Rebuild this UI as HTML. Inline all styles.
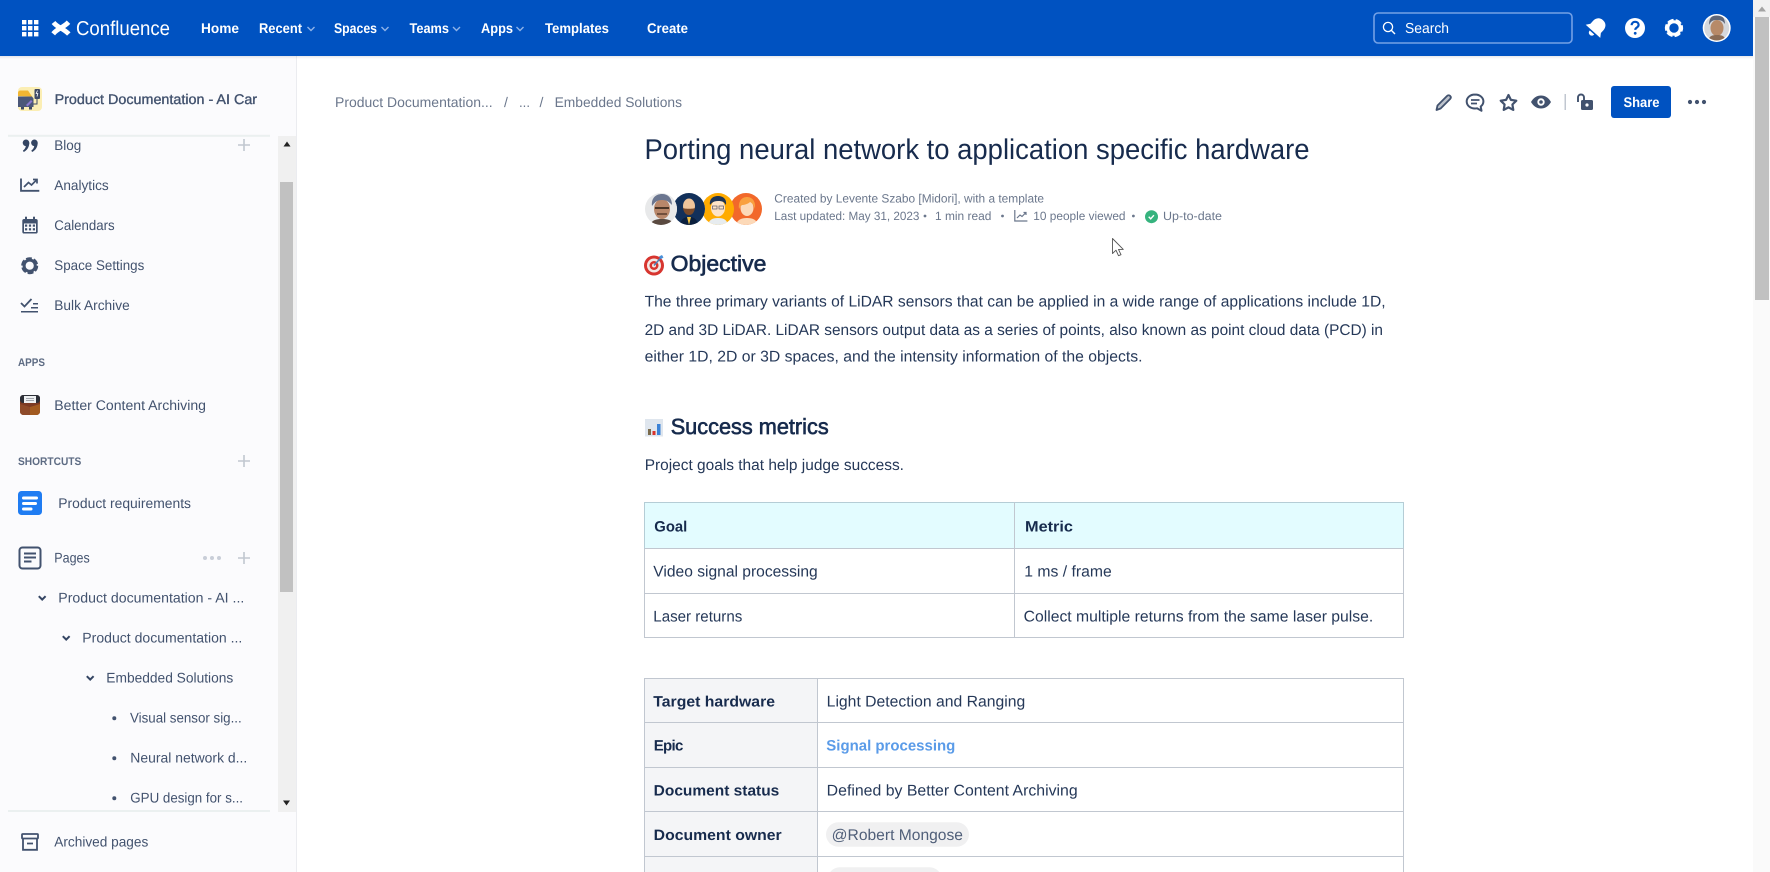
<!DOCTYPE html>
<html><head><meta charset="utf-8"><title>Porting neural network to application specific hardware</title>
<style>
html,body{margin:0;padding:0;background:#fff;overflow:hidden;width:1770px;height:872px}
svg{display:block}
text{font-family:"Liberation Sans",sans-serif;text-rendering:geometricPrecision}
.s{font-size:14px;fill:#42526e}
.n{font-size:14px;font-weight:bold;fill:#fff}
.m{font-size:12px;fill:#6b778c}
.b{font-size:15.5px;fill:#253858}
.h{font-size:15px;font-weight:bold;fill:#172b4d}
.bc{font-size:14px;fill:#6b778c}
</style></head><body>
<svg width="1770" height="872" viewBox="0 0 1770 872" xmlns="http://www.w3.org/2000/svg">
<defs>
<linearGradient id="sh" x1="0" y1="0" x2="0" y2="1"><stop offset="0" stop-color="#091e42" stop-opacity=".1"/><stop offset="1" stop-color="#091e42" stop-opacity="0"/></linearGradient>
<clipPath id="c1"><circle cx="661" cy="209" r="16"/></clipPath>
<clipPath id="c2"><circle cx="689" cy="209" r="16"/></clipPath>
<clipPath id="c3"><circle cx="718" cy="209" r="16"/></clipPath>
<clipPath id="c4"><circle cx="746" cy="209" r="16"/></clipPath>
<clipPath id="c5"><circle cx="1716.7" cy="28" r="12.5"/></clipPath>
</defs>
<rect width="1770" height="872" fill="#fff"/>

<!-- sidebar -->
<rect x="0" y="56" width="296" height="816" fill="#fbfbfd"/>
<rect x="296" y="56" width="1" height="816" fill="#ebecf0"/>

<!-- sidebar scrollbar -->
<rect x="278" y="136" width="18" height="676" fill="#f0f0f0"/>
<rect x="280" y="182" width="13" height="410" fill="#c1c1c1"/>
<path d="M283.5 146.5h7l-3.5-5z" fill="#222"/>
<path d="M283 800.5h7l-3.5 5z" fill="#222"/>

<!-- nav -->
<rect x="0" y="0" width="1753" height="56" fill="#0052c1"/>
<rect x="0" y="56" width="1753" height="3" fill="url(#sh)"/>
<g fill="#fff">
<rect x="22" y="20" width="4.4" height="4.4"/><rect x="28" y="20" width="4.4" height="4.4"/><rect x="34" y="20" width="4.4" height="4.4"/>
<rect x="22" y="26" width="4.4" height="4.4"/><rect x="28" y="26" width="4.4" height="4.4"/><rect x="34" y="26" width="4.4" height="4.4"/>
<rect x="22" y="32" width="4.4" height="4.4"/><rect x="28" y="32" width="4.4" height="4.4"/><rect x="34" y="32" width="4.4" height="4.4"/>
</g>
<g fill="none" stroke="#fff" stroke-width="4.8">
<path d="M53.500 22.500C58 28 63 28 68.800 34"/>
<path d="M53.200 33.800C58 28 63 28 68.500 22.200"/>
</g>
<text x="76" y="35" textLength="94" lengthAdjust="spacingAndGlyphs" style="font-size:20px;fill:#fff">Confluence</text>
<text class="n" x="201" y="33" textLength="38" lengthAdjust="spacingAndGlyphs">Home</text>
<text class="n" x="259" y="33" textLength="43" lengthAdjust="spacingAndGlyphs">Recent</text>
<text class="n" x="334" y="33" textLength="43" lengthAdjust="spacingAndGlyphs">Spaces</text>
<text class="n" x="409.5" y="33" textLength="39.5" lengthAdjust="spacingAndGlyphs">Teams</text>
<text class="n" x="481" y="33" textLength="32" lengthAdjust="spacingAndGlyphs">Apps</text>
<text class="n" x="545" y="33" textLength="64" lengthAdjust="spacingAndGlyphs">Templates</text>
<text class="n" x="647" y="33" textLength="41" lengthAdjust="spacingAndGlyphs">Create</text>
<g fill="none" stroke="#8fb3e8" stroke-width="1.4">
<path d="M307.5 27l3.5 3.5 3.5-3.5"/><path d="M381.5 27l3.5 3.5 3.5-3.5"/><path d="M453 27l3.5 3.5 3.5-3.5"/><path d="M516.5 27l3.5 3.5 3.5-3.5"/>
</g>

<!-- search -->
<rect x="1374" y="13" width="198" height="30" rx="4" fill="#0052c1" stroke="#74a1e6" stroke-width="1.6"/>
<circle cx="1388" cy="27" r="4.6" fill="none" stroke="#fff" stroke-width="1.3"/>
<path d="M1391.4 30.4l3.6 3.6" stroke="#fff" stroke-width="1.4"/>
<text x="1405" y="33" textLength="44" lengthAdjust="spacingAndGlyphs" style="font-size:14.5px;fill:#fff">Search</text>
<!-- bell -->
<g transform="rotate(42 1596 28)" fill="#fff">
<path d="M1596 17.500c-4.800 0-7 3.500-7 7.500v3.500l-2.800 4h19.600l-2.800-4V25c0-4-2.200-7.500-7-7.500z"/>
<path d="M1593 34h6c0 2-1.300 3.200-3 3.200s-3-1.200-3-3.200z"/>
</g>
<!-- help -->
<circle cx="1635" cy="28" r="10" fill="#fff"/>
<path d="M1631.6 25.200c.2-2.200 1.700-3.400 3.500-3.400 2.100 0 3.500 1.300 3.500 3 0 1.400-.8 2.100-1.800 2.800-.9.6-1.500 1.100-1.500 2.300" fill="none" stroke="#0052c1" stroke-width="2.200"/>
<circle cx="1635.200" cy="33.300" r="1.400" fill="#0052c1"/>
<!-- gear -->
<g fill="none" stroke="#fff">
<circle cx="1674" cy="28" r="6.200" stroke-width="3"/>
<circle cx="1674" cy="28" r="8" stroke-width="2.200" stroke-dasharray="6.300 2.080" transform="rotate(-20 1674 28)"/>
</g>
<!-- avatar -->
<circle cx="1716.700" cy="28" r="14" fill="#fff"/>
<g clip-path="url(#c5)">
<rect x="1703" y="15" width="28" height="26" fill="#d5d8dc"/>
<ellipse cx="1717" cy="28" rx="6.500" ry="8" fill="#b78a68"/>
<path d="M1709 25c0-7 3-10 8-10s8 3 8 9c-2-3-4-4-8-4s-6 1-8 5z" fill="#5e6678"/>
<path d="M1708 41c1-5 4-6 9-6s8 1 9 6z" fill="#8a6c55"/>
</g>

<!-- right page scrollbar -->
<rect x="1753" y="0" width="17" height="872" fill="#fafafa"/>
<rect x="1753" y="0" width="17" height="17" fill="#f1f1f1"/>
<rect x="1755" y="17" width="14" height="283" fill="#c1c1c1"/>
<path d="M1758 11.500h8l-4-5z" fill="#a3a3a3"/>

<!-- page actions -->
<g fill="none" stroke="#42526e" stroke-width="1.800">
<path d="M1436.500 110l1-4.500 9.500-9.500c1-1 2.300-1 3.100-.1.900.9.900 2.100 0 3.100l-9.500 9.500z" stroke-linejoin="round" fill="#42526e" fill-opacity=".35"/>
<path d="M1475 94.500c-4.700 0-8.300 3-8.300 7s3.600 7 8.300 7c.7 0 1.300 0 2-.2l4.500 2.500-.8-4.300c1.700-1.300 2.700-3.100 2.700-5 0-4-3.700-7-8.400-7z" stroke-linejoin="round" stroke-width="2"/>
<path d="M1471 100h8.500M1471 103.500h6" stroke-width="1.800"/>
<path d="M1508.500 95l2.400 4.900 5.400.8-3.900 3.800.9 5.400-4.800-2.500-4.800 2.500.9-5.400-3.900-3.800 5.400-.8z" stroke-linejoin="round" stroke-width="2.200"/>
</g>
<path d="M1531 102c2.500-4.300 6-6.500 10-6.500s7.500 2.200 10 6.500c-2.500 4.300-6 6.500-10 6.500s-7.500-2.200-10-6.500z" fill="#42526e"/>
<circle cx="1541" cy="102" r="3.700" fill="#fff"/><circle cx="1541" cy="102" r="1.800" fill="#42526e"/>
<rect x="1564.500" y="94" width="1.500" height="16" fill="#c1c7d0"/>
<path d="M1578 102v-4.500c0-1.900 1.300-3 3-3s3 1.100 3 3v3" fill="none" stroke="#42526e" stroke-width="1.900"/>
<rect x="1581" y="100" width="12" height="10" rx="1.500" fill="#42526e"/>
<circle cx="1587" cy="105" r="1.600" fill="#fff"/>
<rect x="1611" y="86" width="60" height="32" rx="3" fill="#0052c1"/>
<text x="1623.500" y="107" textLength="36" lengthAdjust="spacingAndGlyphs" style="font-size:14px;font-weight:bold;fill:#fff">Share</text>
<g fill="#42526e"><circle cx="1690" cy="102" r="2.100"/><circle cx="1697" cy="102" r="2.100"/><circle cx="1704" cy="102" r="2.100"/></g>

<!-- space header -->
<rect x="18" y="87" width="24" height="24" rx="4" fill="#fbeeb4"/>
<path d="M18 96v-3c0-1.500 1-2.500 2.500-2.500h7.500l4 6z" fill="#f2b632"/>
<path d="M18 96.500h14l1.500 2v8.500H18z" fill="#4b5778"/>
<path d="M26 105l5-5 1.500 1.500-5 5z" fill="#8a78d0"/>
<rect x="21" y="107" width="3" height="2.500" fill="#3f4a66"/><rect x="29" y="107" width="3" height="2.500" fill="#3f4a66"/>
<rect x="34.500" y="89" width="5.500" height="10" rx="1" fill="#3f4a66"/>
<path d="M37.500 90.500l-1.300 3h1.600l-.8 3" stroke="#fff" stroke-width=".8" fill="none"/>
<path d="M37 99v5h-4" stroke="#3f4a66" stroke-width="1" fill="none"/>
<text x="54.600" y="104" textLength="202.500" lengthAdjust="spacingAndGlyphs" stroke="#42526e" stroke-width=".35" style="font-size:14px;fill:#42526e">Product Documentation - AI Car</text>

<rect x="8" y="134.800" width="262" height="2" fill="#ebf0f0"/>
<rect x="8" y="810" width="262" height="2" fill="#ebf0f0"/>

<!-- sidebar items -->
<text class="s" x="54.300" y="150" textLength="27" lengthAdjust="spacingAndGlyphs">Blog</text>
<text class="s" x="54.300" y="190" textLength="54.400" lengthAdjust="spacingAndGlyphs">Analytics</text>
<text class="s" x="54.300" y="230" textLength="60.400" lengthAdjust="spacingAndGlyphs">Calendars</text>
<text class="s" x="54.300" y="270" textLength="90" lengthAdjust="spacingAndGlyphs">Space Settings</text>
<text class="s" x="54.300" y="310" textLength="75.400" lengthAdjust="spacingAndGlyphs">Bulk Archive</text>
<text x="18" y="366" textLength="27" lengthAdjust="spacingAndGlyphs" style="font-size:11px;font-weight:bold;fill:#5e6c84">APPS</text>
<text class="s" x="54.300" y="410" textLength="151.700" lengthAdjust="spacingAndGlyphs">Better Content Archiving</text>
<text x="18" y="465" textLength="63.300" lengthAdjust="spacingAndGlyphs" style="font-size:11px;font-weight:bold;fill:#5e6c84">SHORTCUTS</text>
<text class="s" x="58.300" y="508" textLength="132.700" lengthAdjust="spacingAndGlyphs">Product requirements</text>
<text class="s" x="54.300" y="562.700" textLength="35.400" lengthAdjust="spacingAndGlyphs">Pages</text>
<text class="s" x="58.300" y="602.700" textLength="186" lengthAdjust="spacingAndGlyphs">Product documentation - AI ...</text>
<text class="s" x="82.300" y="642.700" textLength="160" lengthAdjust="spacingAndGlyphs">Product documentation ...</text>
<text class="s" x="106.300" y="682.700" textLength="127" lengthAdjust="spacingAndGlyphs">Embedded Solutions</text>
<text class="s" x="130" y="722.700" textLength="111.700" lengthAdjust="spacingAndGlyphs">Visual sensor sig...</text>
<text class="s" x="130.300" y="762.700" textLength="117" lengthAdjust="spacingAndGlyphs">Neural network d...</text>
<text class="s" x="130.300" y="802.700" textLength="112.700" lengthAdjust="spacingAndGlyphs">GPU design for s...</text>
<text class="s" x="54.300" y="846.700" textLength="94" lengthAdjust="spacingAndGlyphs">Archived pages</text>

<!-- plus icons -->
<g stroke="#c1c7d0" stroke-width="1.600" fill="none">
<path d="M238 145h12M244 139v12"/>
<path d="M238 461h12M244 455v12"/>
<path d="M238 558h12M244 552v12"/>
</g>
<g fill="#c9ced8"><circle cx="205" cy="558" r="2"/><circle cx="212" cy="558" r="2"/><circle cx="219" cy="558" r="2"/></g>

<!-- sidebar icons -->
<g fill="#344563">
<circle cx="26" cy="142.800" r="3.300"/>
<path d="M29.300 142.800c0 4.500-2.400 7.800-5.600 9.200l-.8-1.400c1.700-1.100 2.800-3 3-5z"/>
<circle cx="34.400" cy="142.800" r="3.300"/>
<path d="M37.700 142.800c0 4.500-2.400 7.800-5.600 9.200l-.8-1.400c1.700-1.100 2.800-3 3-5z"/>
</g>
<g fill="none" stroke="#42526e" stroke-width="1.800">
<path d="M21 178.500v12.300h18.300"/>
<path d="M24 187l4.500-4.500 3 2.500 5-5M33 179.500h4v4" stroke-width="1.700"/>
</g>
<rect x="22.300" y="219" width="15.400" height="14.500" rx="1.800" fill="#42526e"/>
<rect x="25" y="216.700" width="2" height="4" fill="#42526e"/><rect x="33" y="216.700" width="2" height="4" fill="#42526e"/>
<rect x="24" y="223.500" width="12" height="8.500" fill="#fbfbfd"/>
<g fill="#42526e"><rect x="25" y="224.500" width="2.200" height="2.200"/><rect x="28.900" y="224.500" width="2.200" height="2.200"/><rect x="32.800" y="224.500" width="2.200" height="2.200"/><rect x="25" y="228.200" width="2.200" height="2.200"/><rect x="28.900" y="228.200" width="2.200" height="2.200"/><rect x="32.800" y="228.200" width="2.200" height="2.200"/></g>
<g fill="none" stroke="#42526e">
<circle cx="29.700" cy="265.700" r="5.600" stroke-width="3"/>
<circle cx="29.700" cy="265.700" r="7.400" stroke-width="2.200" stroke-dasharray="5.800 1.950"/>
</g>
<g fill="none" stroke="#42526e" stroke-width="1.800">
<path d="M21 303l3.500 3.500 7-7.500"/><path d="M21 311.800h17M31 307.800h7M33 303.800h5" stroke-width="1.500"/>
</g>
<!-- better content archiving icon -->
<rect x="20" y="395" width="20" height="20" rx="3.500" fill="#7c3a24"/>
<rect x="20" y="395" width="20" height="8" rx="3" fill="#2c2f38"/>
<rect x="24" y="396" width="12" height="7" fill="#eef0f2"/>
<path d="M26 398.500h8M26 400.500h8" stroke="#8a8f98" stroke-width=".8"/>
<path d="M20 404l10 3v8h-6.500a3.500 3.500 0 0 1-3.500-3.500z" fill="#8e4a2a"/>
<path d="M30 407l10-3v7.500a3.500 3.500 0 0 1-3.500 3.500H30z" fill="#a25a20"/>
<!-- product requirements icon -->
<rect x="18" y="491" width="24" height="24" rx="3.500" fill="#1f7cf2"/>
<g stroke="#fff" stroke-width="3" stroke-linecap="round"><path d="M23.500 498h13M23.500 503.500h12M23.500 509h7.500"/></g>
<!-- pages icon -->
<rect x="19.500" y="547.500" width="21" height="21" rx="3" fill="none" stroke="#42526e" stroke-width="2"/>
<path d="M24 553.500h12M24 557.500h12M24 561.500h7.500" stroke="#42526e" stroke-width="2"/>
<!-- chevrons -->
<g fill="none" stroke="#344563" stroke-width="2"><path d="M38.800 596.200l3.400 3.400 3.400-3.400"/><path d="M62.800 636.200l3.400 3.400 3.400-3.400"/><path d="M86.800 676.200l3.400 3.400 3.400-3.400"/></g>
<g fill="#42526e"><circle cx="114.300" cy="718.300" r="2"/><circle cx="114.300" cy="758.300" r="2"/><circle cx="114.300" cy="798.300" r="2"/></g>
<!-- archive -->
<rect x="22" y="834" width="16" height="4.500" rx=".8" fill="none" stroke="#42526e" stroke-width="1.800"/>
<path d="M23 838.500v11.300h14v-11.300M27 843.500h6" fill="none" stroke="#42526e" stroke-width="1.800"/>

<!-- breadcrumb -->
<text class="bc" x="335" y="107" textLength="157.700" lengthAdjust="spacingAndGlyphs">Product Documentation...</text>
<text class="bc" x="504" y="107" textLength="6">/</text>
<text class="bc" x="519" y="107" textLength="11" lengthAdjust="spacingAndGlyphs">...</text>
<text class="bc" x="539.500" y="107" textLength="6">/</text>
<text class="bc" x="554.600" y="107" textLength="127.400" lengthAdjust="spacingAndGlyphs">Embedded Solutions</text>

<!-- title -->
<text x="644.500" y="159" textLength="665" lengthAdjust="spacingAndGlyphs" style="font-size:28.500px;fill:#172b4d">Porting neural network to application specific hardware</text>

<!-- avatars -->
<g clip-path="url(#c4)"><rect x="730" y="193" width="32" height="32" fill="#f2682a"/><ellipse cx="747" cy="208" rx="6.500" ry="8" fill="#fcd9b8"/><path d="M739 209c-1-8 3-12 8-12s9 4 8 12c-1-4-3-6-5-7-2 2-6 3-8 3-1 1-2 2-3 4z" fill="#f9a03f"/><path d="M736 225c1-5 5-7 11-7s10 2 11 7z" fill="#fcd9b8"/></g>
<g clip-path="url(#c3)"><rect x="702" y="193" width="32" height="32" fill="#ffab00"/><ellipse cx="718" cy="208" rx="7" ry="8.500" fill="#fde4c8"/><path d="M710 205c-1-6 3-9 8-9s9 3 8 9c-2-3-3-4-8-4s-6 2-8 4z" fill="#1d3557"/><path d="M708 225c1-5 4-7 10-7s9 2 10 7z" fill="#e7ecef"/><rect x="712.500" y="206" width="4.500" height="3" fill="none" stroke="#556" stroke-width=".7"/><rect x="719" y="206" width="4.500" height="3" fill="none" stroke="#556" stroke-width=".7"/></g>
<circle cx="689" cy="209" r="16" fill="#fff"/>
<g clip-path="url(#c2)"><rect x="673" y="193" width="32" height="32" fill="#12305a"/><ellipse cx="689" cy="206" rx="6" ry="7.500" fill="#f0c59a"/><path d="M683 208c1 5 3 7 6 7s5-2 6-7c-2 1-10 1-12 0z" fill="#7a4a2a"/><path d="M680 225c1-6 4-8 9-8s8 2 9 8z" fill="#0b1f3d"/><path d="M687 217h4l-2 8z" fill="#f0c040"/></g>
<circle cx="661" cy="209" r="16" fill="#fff"/>
<g clip-path="url(#c1)"><rect x="645" y="193" width="32" height="32" fill="#e8e9ea"/><ellipse cx="662" cy="209" rx="8" ry="10" fill="#b8876a"/><path d="M652 206c-1-8 4-12 10-12s10 4 10 11c-3-3-5-5-10-5s-7 2-10 6z" fill="#6b7690"/><path d="M650 225c2-5 6-6 12-6s10 1 12 6z" fill="#5a4a40"/><rect x="655" y="207" width="14" height="2" fill="#4a3526"/><path d="M657 214h10" stroke="#5a3d2d" stroke-width="1.500"/></g>

<!-- meta -->
<text class="m" x="774.300" y="202.300" textLength="269.700" lengthAdjust="spacingAndGlyphs">Created by Levente Szabo [Midori], with a template</text>
<text class="m" x="774.300" y="220" textLength="145.100" lengthAdjust="spacingAndGlyphs">Last updated: May 31, 2023</text>
<circle cx="925" cy="216" r="1.400" fill="#6b778c"/>
<text class="m" x="935" y="220" textLength="56.400" lengthAdjust="spacingAndGlyphs">1 min read</text>
<circle cx="1002.500" cy="216" r="1.400" fill="#6b778c"/>
<g fill="none" stroke="#6b778c" stroke-width="1.200"><path d="M1014.800 210v11h12.600"/><path d="M1017 218l3-3 2 1.500 3.500-3.500M1023.500 212.500h2.500v2.500"/></g>
<text class="m" x="1033.300" y="220" textLength="92.200" lengthAdjust="spacingAndGlyphs">10 people viewed</text>
<circle cx="1133.400" cy="216" r="1.400" fill="#6b778c"/>
<circle cx="1151.500" cy="216.700" r="6.500" fill="#36b37e"/>
<path d="M1148.700 216.800l2 2 3.200-3.600" fill="none" stroke="#fff" stroke-width="1.400"/>
<text class="m" x="1163" y="220" textLength="59" lengthAdjust="spacingAndGlyphs">Up-to-date</text>

<!-- cursor -->
<path d="M1112.500 238.500v15l3.500-3.300 2.500 5.500 2.500-1-2.500-5.300h4.800z" fill="#fff" stroke="#555" stroke-width=".9" stroke-linejoin="round"/>

<!-- objective -->
<circle cx="654" cy="265.500" r="10" fill="#d7352f"/><circle cx="654" cy="265.500" r="7" fill="#f4e8e4"/><circle cx="654" cy="265.500" r="4.500" fill="#d7352f"/><circle cx="654" cy="265.500" r="2" fill="#f4e8e4"/>
<path d="M654 265.500l7-8" stroke="#4a7fb5" stroke-width="1.500"/><path d="M659 256.500l3-1.500 1.500 2.500-2.500 1.500z" fill="#4a90d9"/>
<text x="670.700" y="271" textLength="95.700" lengthAdjust="spacingAndGlyphs" stroke="#172b4d" stroke-width=".65" style="font-size:22px;fill:#172b4d">Objective</text>
<text class="b" x="644.600" y="306.700" textLength="741" lengthAdjust="spacingAndGlyphs">The three primary variants of LiDAR sensors that can be applied in a wide range of applications include 1D,</text>
<text class="b" x="644.600" y="335" textLength="738.400" lengthAdjust="spacingAndGlyphs">2D and 3D LiDAR. LiDAR sensors output data as a series of points, also known as point cloud data (PCD) in</text>
<text class="b" x="644.600" y="361.700" textLength="497.900" lengthAdjust="spacingAndGlyphs">either 1D, 2D or 3D spaces, and the intensity information of the objects.</text>

<!-- success metrics -->
<rect x="645" y="419" width="18" height="17.500" fill="#dfe6ee"/>
<rect x="648" y="429" width="3" height="6" fill="#7a6a4a"/><rect x="652.500" y="431" width="3" height="4" fill="#d9342b"/><rect x="657" y="424" width="3.500" height="11" fill="#3b82d6"/>
<text x="670.700" y="434" textLength="158" lengthAdjust="spacingAndGlyphs" stroke="#172b4d" stroke-width=".65" style="font-size:22px;fill:#172b4d">Success metrics</text>
<text class="b" x="644.700" y="470" textLength="259.300" lengthAdjust="spacingAndGlyphs">Project goals that help judge success.</text>

<!-- table 1 -->
<rect x="644.500" y="502.500" width="759" height="135" fill="#fff" stroke="#c1c7d0"/>
<rect x="645" y="503" width="758" height="45" fill="#e3fcff"/>
<rect x="644.500" y="502.500" width="759" height="46" fill="none" stroke="#b5cdd6"/>
<path d="M644.500 548.500h759M644.500 593.500h759M1014.500 502.500v135" stroke="#c1c7d0" fill="none"/>
<text class="h" x="654.300" y="531.700" textLength="33" lengthAdjust="spacingAndGlyphs">Goal</text>
<text class="h" x="1025" y="531.700" textLength="48" lengthAdjust="spacingAndGlyphs">Metric</text>
<text class="b" x="653.300" y="576.700" textLength="164.400" lengthAdjust="spacingAndGlyphs">Video signal processing</text>
<text class="b" x="1024.300" y="576.700" textLength="87.400" lengthAdjust="spacingAndGlyphs">1 ms / frame</text>
<text class="b" x="653.300" y="621.700" textLength="89" lengthAdjust="spacingAndGlyphs">Laser returns</text>
<text class="b" x="1023.600" y="621.700" textLength="349.700" lengthAdjust="spacingAndGlyphs">Collect multiple returns from the same laser pulse.</text>

<!-- table 2 -->
<rect x="644.500" y="678.500" width="759" height="200" fill="#fff" stroke="#c1c7d0"/>
<rect x="645" y="679" width="173" height="193" fill="#f4f5f7"/>
<path d="M644.500 722.500h759M644.500 767.500h759M644.500 811.500h759M644.500 856.500h759M817.500 678.500v194" stroke="#c1c7d0" fill="none"/>
<text class="h" x="653.300" y="706.700" textLength="121.700" lengthAdjust="spacingAndGlyphs">Target hardware</text>
<text x="653.700" y="750.700" textLength="29.600" lengthAdjust="spacing" style="font-size:15px;font-weight:bold;fill:#172b4d">Epic</text>
<text class="h" x="653.700" y="795.700" textLength="125.600" lengthAdjust="spacingAndGlyphs">Document status</text>
<text class="h" x="653.700" y="840" textLength="128" lengthAdjust="spacingAndGlyphs">Document owner</text>
<text class="b" x="826.700" y="706.700" textLength="198.600" lengthAdjust="spacingAndGlyphs">Light Detection and Ranging</text>
<text x="826.300" y="750.700" textLength="129" lengthAdjust="spacingAndGlyphs" style="font-size:15px;font-weight:bold;fill:#5a9be8">Signal processing</text>
<text class="b" x="826.700" y="795.700" textLength="251" lengthAdjust="spacingAndGlyphs">Defined by Better Content Archiving</text>
<rect x="826" y="822.300" width="143" height="24.400" rx="12.200" fill="#f0f0f1"/>
<text x="831.700" y="840" textLength="131.300" lengthAdjust="spacingAndGlyphs" style="font-size:15.500px;fill:#505f79">@Robert Mongose</text>
<rect x="827.700" y="867.300" width="114" height="24" rx="12" fill="#f0f0f1"/>
</svg>
</body></html>
